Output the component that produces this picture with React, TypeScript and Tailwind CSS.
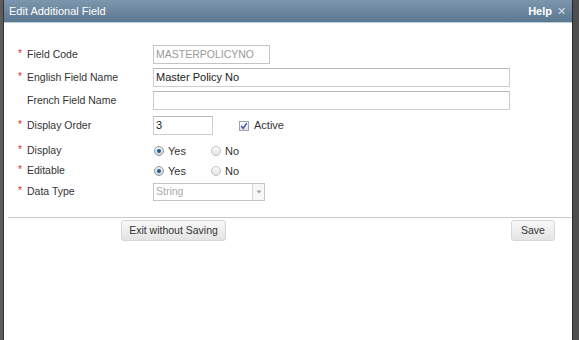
import React from "react";

function Label({ text, required = true }: { text: string; required?: boolean }) {
    return (
        <div className="flex items-center w-[149px] shrink-0">
            <span className="ml-[14px] w-[9px] text-[#e02828] text-[10px] leading-none -mt-[2px]">{required ? "*" : ""}</span>
            <span className="text-[#333]">{text}</span>
        </div>
    );
}

function Radio({ checked, label }: { checked?: boolean; label: string }) {
    return (
        <span className="flex items-center w-[57px]">
            <span
                className={`w-[10px] h-[10px] rounded-full border flex items-center justify-center ${
                    checked
                        ? "border-[#8c98a4] bg-gradient-to-b from-[#f2f2f2] to-[#d6d6d6]"
                        : "border-[#c0c0c0] bg-gradient-to-b from-[#fbfbfb] to-[#e4e4e4]"
                }`}
            >
                {checked && <span className="w-[4px] h-[4px] rounded-full bg-[#1d5c94]" />}
            </span>
            <span className="ml-[4px] text-[#333] text-[11px]">{label}</span>
        </span>
    );
}

export default function App() {
    return (
        <div className="w-[579px] h-[340px] bg-[#505050] flex font-['Liberation_Sans',Arial,sans-serif] text-[10.5px]">
            <div className="w-[3px] bg-[#5c5c5c]" />
            <div className="w-[569px] flex flex-col bg-white border-l border-[#333]">
                <div className="h-[22px] flex items-center justify-between pl-[5px] pr-[6px] bg-gradient-to-b from-[#7c96ad] to-[#5c7891]">
                    <span className="text-white text-[11px]">Edit Additional Field</span>
                    <span className="text-white text-[11px] font-bold flex items-center gap-[5px]">
                        Help <span className="font-normal text-[#d4dde6] text-[11px]">✕</span>
                    </span>
                </div>
                <div className="h-px bg-[#b9cbdc]" />
                <div className="flex flex-col pt-[22px]">
                    <div className="flex items-center h-[19px]">
                        <Label text="Field Code" />
                        <div className="w-[117px] h-[19px] border border-[#c4c4c4] flex items-center px-[2px] text-[#9a9a9a]">
                            MASTERPOLICYNO
                        </div>
                    </div>
                    <div className="flex items-center h-[19px] mt-[4px]">
                        <Label text="English Field Name" />
                        <div className="w-[357px] h-[19px] border border-[#cdcdcd] border-t-[#b8b8b8] flex items-center px-[2px] text-[#222] text-[11px]">
                            Master Policy No
                        </div>
                    </div>
                    <div className="flex items-center h-[19px] mt-[4px]">
                        <Label text="French Field Name" required={false} />
                        <div className="w-[357px] h-[19px] border border-[#cdcdcd] border-t-[#b8b8b8]" />
                    </div>
                    <div className="flex items-center h-[19px] mt-[6px]">
                        <Label text="Display Order" />
                        <div className="w-[60px] h-[19px] border border-[#cdcdcd] border-t-[#b8b8b8] flex items-center px-[2px] text-[#222] text-[11px]">
                            3
                        </div>
                        <span className="ml-[26px] w-[10px] h-[10px] border border-[#9ca5ae] bg-gradient-to-b from-[#fdfdfd] to-[#e2e2e2] flex items-center justify-center">
                            <svg width="8" height="8" viewBox="0 0 8 8">
                                <path d="M1.2 4 L3.2 6.3 L6.8 1.2" stroke="#3650b0" strokeWidth="1.4" fill="none" />
                            </svg>
                        </span>
                        <span className="ml-[5px] text-[#333] text-[11px]">Active</span>
                    </div>
                    <div className="flex items-center h-[18px] mt-[7px]">
                        <Label text="Display" />
                        <span className="pl-[1px] flex">
                            <Radio checked label="Yes" />
                            <Radio label="No" />
                        </span>
                    </div>
                    <div className="flex items-center h-[18px] mt-[2px]">
                        <Label text="Editable" />
                        <span className="pl-[1px] flex">
                            <Radio checked label="Yes" />
                            <Radio label="No" />
                        </span>
                    </div>
                    <div className="flex items-center h-[18px] mt-[3px]">
                        <Label text="Data Type" />
                        <div className="w-[112px] h-[18px] border border-[#c4c4c4] flex items-center">
                            <span className="flex-1 px-[2px] text-[#aaa]">String</span>
                            <span className="w-[12px] h-full border-l border-[#d6d6d6] flex items-center justify-center bg-[#f7f7f7]">
                                <svg width="6" height="4" viewBox="0 0 6 4">
                                    <path d="M0.5 0.5 L5.5 0.5 L3 3.5 Z" fill="#a0a0a0" />
                                </svg>
                            </span>
                        </div>
                    </div>
                </div>
                <div className="mt-[16px] ml-[4px] mr-[1px] border-t border-[#c8c8c8]" />
                <div className="flex items-start justify-between pl-[117px] pr-[17px] pt-[2px]">
                    <button className="w-[105px] h-[21px] border border-[#d6d6d6] rounded-[3px] bg-gradient-to-b from-[#f8f8f8] to-[#e4e4e4] text-[#333]">
                        Exit without Saving
                    </button>
                    <button className="w-[44px] h-[21px] border border-[#d6d6d6] rounded-[3px] bg-gradient-to-b from-[#f8f8f8] to-[#e4e4e4] text-[#333]">
                        Save
                    </button>
                </div>
            </div>
            <div className="w-[7px] bg-[#4e4e4e] border-l border-[#2a2a2a]" />
        </div>
    );
}
